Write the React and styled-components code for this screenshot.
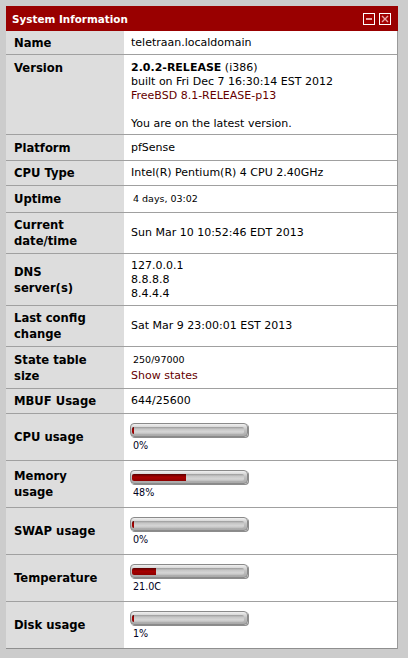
import styled, { createGlobalStyle } from "styled-components";

const GlobalStyle = createGlobalStyle`
  html, body {
    margin: 0;
    padding: 0;
    background: #cccccc;
  }
  body {
    font-family: "DejaVu Sans", Verdana, sans-serif;
    color: #000;
  }
`;

const Panel = styled.div`
  width: 392px;
  margin: 6px 0 0 6px;
`;

const TitleBar = styled.div`
  display: flex;
  align-items: center;
  justify-content: space-between;
  height: 25px;
  box-sizing: border-box;
  padding: 0 7px 0 6px;
  background: #990000;
`;

const Title = styled.span`
  color: #ffffff;
  font-weight: bold;
  font-size: 10.4px;
`;

const Controls = styled.div`
  display: flex;
  gap: 4px;
`;

const ControlButton = styled.button`
  display: block;
  width: 12px;
  height: 12px;
  padding: 0;
  border: 0;
  background: none;
  cursor: pointer;
`;

const Table = styled.div`
  background: #ffffff;
  border-right: 1px solid #999999;
`;

const Row = styled.div`
  display: grid;
  grid-template-columns: 118px 1fr;
  min-height: ${(p) => p.$h}px;
  border-bottom: 1px solid #a0a0a0;

  &:last-child {
    border-bottom-color: #8f8f8f;
  }
`;

const Label = styled.div`
  display: flex;
  align-items: ${(p) => (p.$top ? "flex-start" : "center")};
  padding: ${(p) => (p.$top ? "5px 8px 4px" : "0 8px")};
  background: #dddddd;
  font-weight: bold;
  font-size: 11.6px;
  line-height: 16px;
`;

const Value = styled.div`
  display: flex;
  flex-direction: column;
  justify-content: ${(p) => (p.$top ? "flex-start" : "center")};
  padding: ${(p) => p.$pad || "0 7px"};
  font-size: 11px;
  line-height: ${(p) => p.$lh || 14}px;
`;

const Small = styled.span`
  font-size: 9.5px;
  padding-left: 2px;
`;

const RedText = styled.span`
  color: #660000;
`;

const Bar = styled.div`
  box-sizing: border-box;
  width: 118px;
  height: 14px;
  padding: 3px 3px 2px 1px;
  border: 1px solid #8a8a8a;
  border-radius: 4px;
  background: linear-gradient(#f0f0f0, #c4c4c4 45%, #a8a8a8 100%);
  box-shadow: 1px 1px 0 #8c8c8c;
`;

const Track = styled.div`
  display: flex;
  height: 7px;
  border-radius: 2px;
  overflow: hidden;
  background: linear-gradient(#9a9a9a, #c6c6c6 30%, #d6d6d6 70%, #bdbdbd);
`;

const Fill = styled.div`
  min-width: 2px;
  height: 100%;
  background: linear-gradient(#5a0000, #a80000 45%, #8c0000 100%);
`;

const BarText = styled.span`
  margin-top: 2px;
  padding-left: 3px;
  font-size: 9.6px;
  line-height: 14px;
  color: #000022;
`;

const Minimize = () => (
  <svg width="12" height="12" viewBox="0 0 12 12">
    <rect x="0.5" y="0.5" width="11" height="11" fill="#a30000" stroke="#ffffff" />
    <rect x="3" y="5" width="6" height="2" fill="#e8a8a8" />
  </svg>
);

const Close = () => (
  <svg width="12" height="12" viewBox="0 0 12 12">
    <rect x="0.5" y="0.5" width="11" height="11" fill="#a30000" stroke="#ffffff" />
    <path d="M3 3 L9 9 M9 3 L3 9" stroke="#e8a8a8" strokeWidth="1.4" />
  </svg>
);

const Meter = ({ value, text }) => (
  <>
    <Bar>
      <Track>
        <Fill style={{ width: `${value}%` }} />
      </Track>
    </Bar>
    <BarText>{text}</BarText>
  </>
);

const meters = [
  { label: "CPU usage", value: 0, text: "0%" },
  { label: ["Memory", "usage"], value: 48, text: "48%" },
  { label: "SWAP usage", value: 0, text: "0%" },
  { label: "Temperature", value: 21, text: "21.0C" },
  { label: "Disk usage", value: 1, text: "1%" },
];

const App = () => (
  <>
    <GlobalStyle />
    <Panel>
      <TitleBar>
        <Title>System Information</Title>
        <Controls>
          <ControlButton aria-label="minimize">
            <Minimize />
          </ControlButton>
          <ControlButton aria-label="close">
            <Close />
          </ControlButton>
        </Controls>
      </TitleBar>
      <Table>
        <Row $h={23}>
          <Label>Name</Label>
          <Value>teletraan.localdomain</Value>
        </Row>
        <Row $h={79}>
          <Label $top>Version</Label>
          <Value $top $pad="6px 7px 0">
            <span>
              <b>2.0.2-RELEASE</b> (i386)
            </span>
            <span>built on Fri Dec 7 16:30:14 EST 2012</span>
            <RedText>FreeBSD 8.1-RELEASE-p13</RedText>
            <span>&nbsp;</span>
            <span>You are on the latest version.</span>
          </Value>
        </Row>
        <Row $h={25}>
          <Label>Platform</Label>
          <Value>pfSense</Value>
        </Row>
        <Row $h={24}>
          <Label>CPU Type</Label>
          <Value>Intel(R) Pentium(R) 4 CPU 2.40GHz</Value>
        </Row>
        <Row $h={26}>
          <Label>Uptime</Label>
          <Value>
            <Small>4 days, 03:02</Small>
          </Value>
        </Row>
        <Row $h={40}>
          <Label>
            Current
            <br />
            date/time
          </Label>
          <Value>Sun Mar 10 10:52:46 EDT 2013</Value>
        </Row>
        <Row $h={51}>
          <Label>
            DNS
            <br />
            server(s)
          </Label>
          <Value>
            <span>127.0.0.1</span>
            <span>8.8.8.8</span>
            <span>8.4.4.4</span>
          </Value>
        </Row>
        <Row $h={40}>
          <Label>
            Last config
            <br />
            change
          </Label>
          <Value>Sat Mar 9 23:00:01 EST 2013</Value>
        </Row>
        <Row $h={41}>
          <Label>
            State table
            <br />
            size
          </Label>
          <Value $lh={16}>
            <Small>250/97000</Small>
            <RedText>Show states</RedText>
          </Value>
        </Row>
        <Row $h={24}>
          <Label>MBUF Usage</Label>
          <Value>644/25600</Value>
        </Row>
        {meters.map((m) => (
          <Row $h={46} key={m.text + m.value}>
            <Label>
              {Array.isArray(m.label) ? (
                <span>
                  {m.label[0]}
                  <br />
                  {m.label[1]}
                </span>
              ) : (
                m.label
              )}
            </Label>
            <Value $top $pad="9px 7px 0 6px">
              <Meter value={m.value} text={m.text} />
            </Value>
          </Row>
        ))}
      </Table>
    </Panel>
  </>
);

export default App;
